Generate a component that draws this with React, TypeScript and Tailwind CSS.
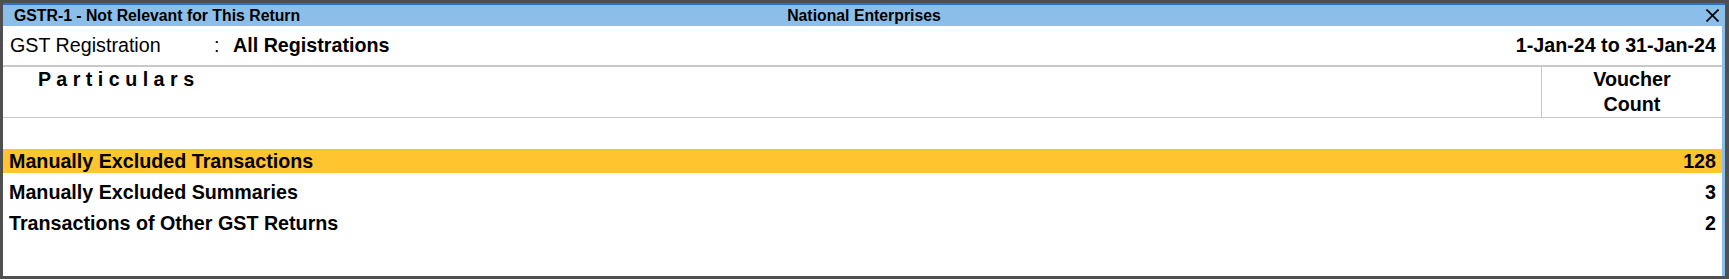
import React from "react";

const rows = [
  { name: "Manually Excluded Transactions", count: "128", active: true },
  { name: "Manually Excluded Summaries", count: "3", active: false },
  { name: "Transactions of Other GST Returns", count: "2", active: false },
];

const App = () => {
  return (
    <div
      className="w-full h-[279px] bg-[#4f4f4f] pt-[3px] pl-[3px] pr-[4px] pb-[3px] text-black"
      style={{ fontFamily: '"Liberation Sans", Arial, sans-serif' }}
    >
      <div className="h-full flex flex-col border-t-2 border-[#2f6fc4]">
        {/* title bar */}
        <div className="relative h-[21px] bg-[#8bbee8] flex items-center pl-[11px] pr-[6px] text-[15.8px] leading-[21px] font-bold">
          <span>GSTR-1 - Not Relevant for This Return</span>
          <span className="absolute left-1/2 -translate-x-1/2 top-0">National Enterprises</span>
          <svg
            className="ml-auto"
            width="13"
            height="13"
            viewBox="0 0 13 13"
            stroke="#000"
            strokeWidth="1.8"
          >
            <line x1="0.5" y1="0.5" x2="12.5" y2="12.5" />
            <line x1="12.5" y1="0.5" x2="0.5" y2="12.5" />
          </svg>
        </div>

        <div className="flex-1 flex flex-col bg-white border-r-[3px] border-[#8bbee8]">
          {/* registration line */}
          <div className="h-[39px] flex items-center justify-between pl-[7px] pr-[6px] text-[19.7px] leading-[25px]">
            <div className="flex items-center">
              <span className="w-[204px]">GST Registration</span>
              <span className="w-[19px]">:</span>
              <span className="font-bold">All Registrations</span>
            </div>
            <span className="font-bold">1-Jan-24 to 31-Jan-24</span>
          </div>

          {/* column heads */}
          <div className="h-[53px] flex border-t-2 border-b border-[#c8c8c8] text-[19.7px] leading-[25px] font-bold">
            <div className="flex-1 pl-[35px] whitespace-pre">P a r t i c u l a r s</div>
            <div className="w-[181px] border-l border-[#c8c8c8] text-center">
              Voucher
              <br />
              Count
            </div>
          </div>

          {/* rows */}
          <div className="flex flex-col gap-[7px] pt-[31px] text-[19.7px] leading-[24px] font-bold">
            {rows.map((r) => (
              <div
                key={r.name}
                className={`h-[24px] flex justify-between pl-[6px] pr-[6px] ${
                  r.active ? "bg-[#fec52e]" : ""
                }`}
              >
                <span>{r.name}</span>
                <span>{r.count}</span>
              </div>
            ))}
          </div>
        </div>
      </div>
    </div>
  );
};

export default App;
